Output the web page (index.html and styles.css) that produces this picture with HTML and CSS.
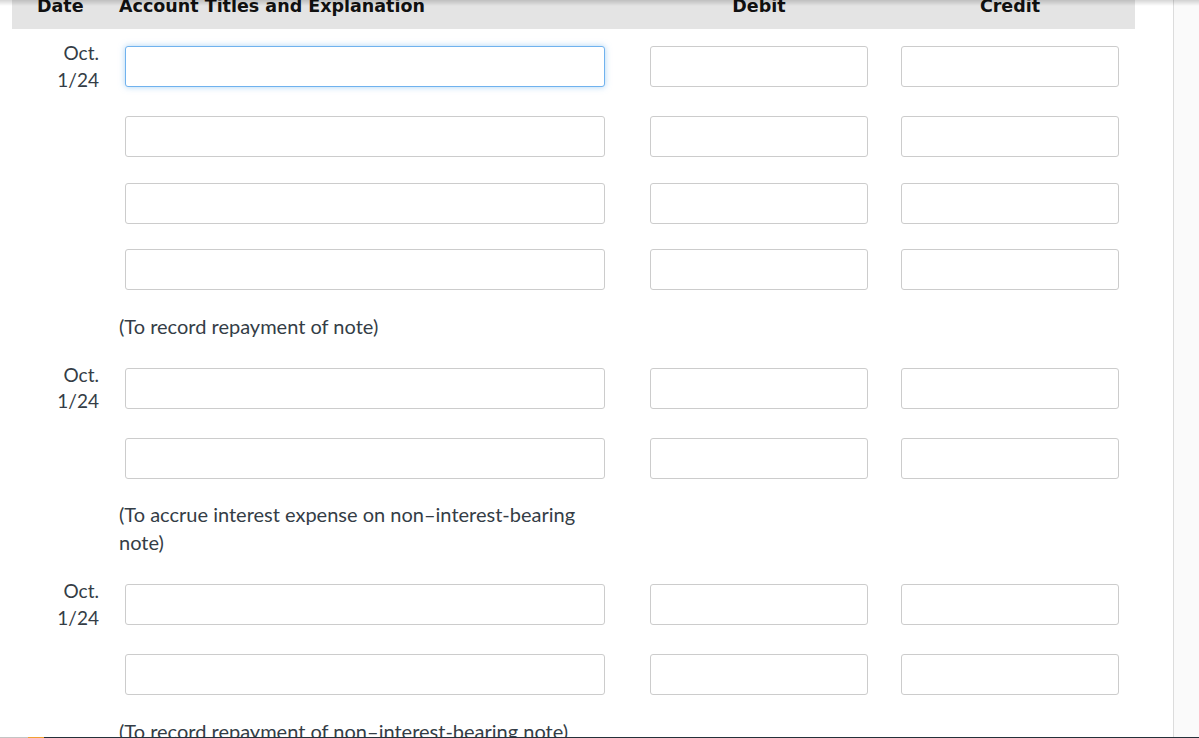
FILE: index.html
```html
<!DOCTYPE html>
<html>
<head>
<meta charset="utf-8">
<link rel="stylesheet" href="styles.css">
</head>
<body>
<div class="layout">
  <main class="main">
    <div class="journal">
      <div class="row head">
        <div class="c-date hd-date">Date</div>
        <div class="c-acct hd-acct">Account Titles and Explanation</div>
        <div class="c-debit hd-center">Debit</div>
        <div class="c-credit hd-center">Credit</div>
      </div>

      <div class="row entry dated">
        <div class="c-date date">Oct.<br>1/24</div>
        <div class="c-acct"><input class="field wide focused" type="text"></div>
        <div class="c-debit"><input class="field" type="text"></div>
        <div class="c-credit"><input class="field" type="text"></div>
      </div>
      <div class="row entry">
        <div class="c-date"></div>
        <div class="c-acct"><input class="field wide" type="text"></div>
        <div class="c-debit"><input class="field" type="text"></div>
        <div class="c-credit"><input class="field" type="text"></div>
      </div>
      <div class="row entry">
        <div class="c-date"></div>
        <div class="c-acct"><input class="field wide" type="text"></div>
        <div class="c-debit"><input class="field" type="text"></div>
        <div class="c-credit"><input class="field" type="text"></div>
      </div>
      <div class="row entry">
        <div class="c-date"></div>
        <div class="c-acct"><input class="field wide" type="text"></div>
        <div class="c-debit"><input class="field" type="text"></div>
        <div class="c-credit"><input class="field" type="text"></div>
      </div>
      <div class="row expl">
        <div class="c-date"></div>
        <div class="c-acct note">(To record repayment of note)</div>
      </div>

      <div class="row entry dated">
        <div class="c-date date">Oct.<br>1/24</div>
        <div class="c-acct"><input class="field wide" type="text"></div>
        <div class="c-debit"><input class="field" type="text"></div>
        <div class="c-credit"><input class="field" type="text"></div>
      </div>
      <div class="row entry">
        <div class="c-date"></div>
        <div class="c-acct"><input class="field wide" type="text"></div>
        <div class="c-debit"><input class="field" type="text"></div>
        <div class="c-credit"><input class="field" type="text"></div>
      </div>
      <div class="row expl">
        <div class="c-date"></div>
        <div class="c-acct note">(To accrue interest expense on non–interest-bearing note)</div>
      </div>

      <div class="row entry dated">
        <div class="c-date date">Oct.<br>1/24</div>
        <div class="c-acct"><input class="field wide" type="text"></div>
        <div class="c-debit"><input class="field" type="text"></div>
        <div class="c-credit"><input class="field" type="text"></div>
      </div>
      <div class="row entry">
        <div class="c-date"></div>
        <div class="c-acct"><input class="field wide" type="text"></div>
        <div class="c-debit"><input class="field" type="text"></div>
        <div class="c-credit"><input class="field" type="text"></div>
      </div>
      <div class="row expl">
        <div class="c-date"></div>
        <div class="c-acct note">(To record repayment of non–interest-bearing note)</div>
      </div>
    </div>
  </main>
  <aside class="side"></aside>
</div>
<div class="top-shade"></div>
<div class="progress">
  <span class="p-gray"></span><span class="p-orange"></span><span class="p-dark"></span>
</div>
</body>
</html>
```

FILE: styles.css
```css
html, body {
  margin: 0;
  padding: 0;
  height: 100%;
  overflow: hidden;
  background: #ffffff;
}
body {
  font-family: Lato, "Open Sans", Arial, sans-serif;
  color: #343d46;
}
.layout {
  display: flex;
  height: 100%;
}
.main {
  flex: 1;
  overflow: hidden;
}
.side {
  width: 25px;
  border-left: 1px solid #dcdcdc;
  background: #fafafa;
}
.journal {
  margin: -24px 0 0 12px;
  width: 1123px;
}
.row {
  display: grid;
  grid-template-columns: 101px 514px 262px 246px;
  align-items: start;
}
.c-acct { padding-left: 12px; }
.c-debit { padding-left: 23px; }
.c-credit { padding-left: 12px; }

.head {
  background: #e4e4e4;
  padding: 20px 0 13px;
  font-family: "DejaVu Sans", Verdana, sans-serif;
  font-weight: 700;
  font-size: 17.5px;
  line-height: 20px;
  color: #111;
  margin-bottom: 4px;
  white-space: nowrap;
}
.head .hd-date { padding-left: 25px; }
.head .hd-acct { padding-left: 6px; }
.head .hd-center { text-align: center; }
.head .c-debit { padding-left: 23px; padding-right: 21px; }
.head .c-credit { padding-left: 12px; padding-right: 16px; }

.entry {
  padding: 13px 0 12.5px;
}
.entry.dated {
  padding-bottom: 10px;
}
.date {
  text-align: right;
  padding-right: 14px;
  font-size: 19px;
  line-height: 26.5px;
  margin-top: -6px;
}
.field {
  display: block;
  box-sizing: border-box;
  width: 218px;
  height: 41px;
  margin: 0;
  border: 1px solid #cccccc;
  border-radius: 3px;
  background: #fff;
  font: inherit;
  padding: 0 8px;
  outline: none;
}
.field.wide { width: 480px; }
.field.focused {
  border-color: #70b2ee;
  box-shadow: 0 0 6px rgba(102, 175, 233, 0.55);
}
.expl {
  padding: 9px 0 15px;
}
.note {
  padding-left: 6px;
  font-size: 20px;
  line-height: 28px;
  width: 478px;
}
.top-shade {
  position: fixed;
  left: 0;
  right: 0;
  top: 0;
  height: 6px;
  background: linear-gradient(to bottom, rgba(0,0,0,0.16), rgba(0,0,0,0));
  pointer-events: none;
}
.progress {
  position: fixed;
  left: 0;
  right: 0;
  bottom: 0;
  height: 1px;
  display: flex;
}
.p-gray { width: 28px; background: #c4c4c4; }
.p-orange { width: 16px; background: #f0a134; }
.p-dark { flex: 1; background: #25313a; }
```
